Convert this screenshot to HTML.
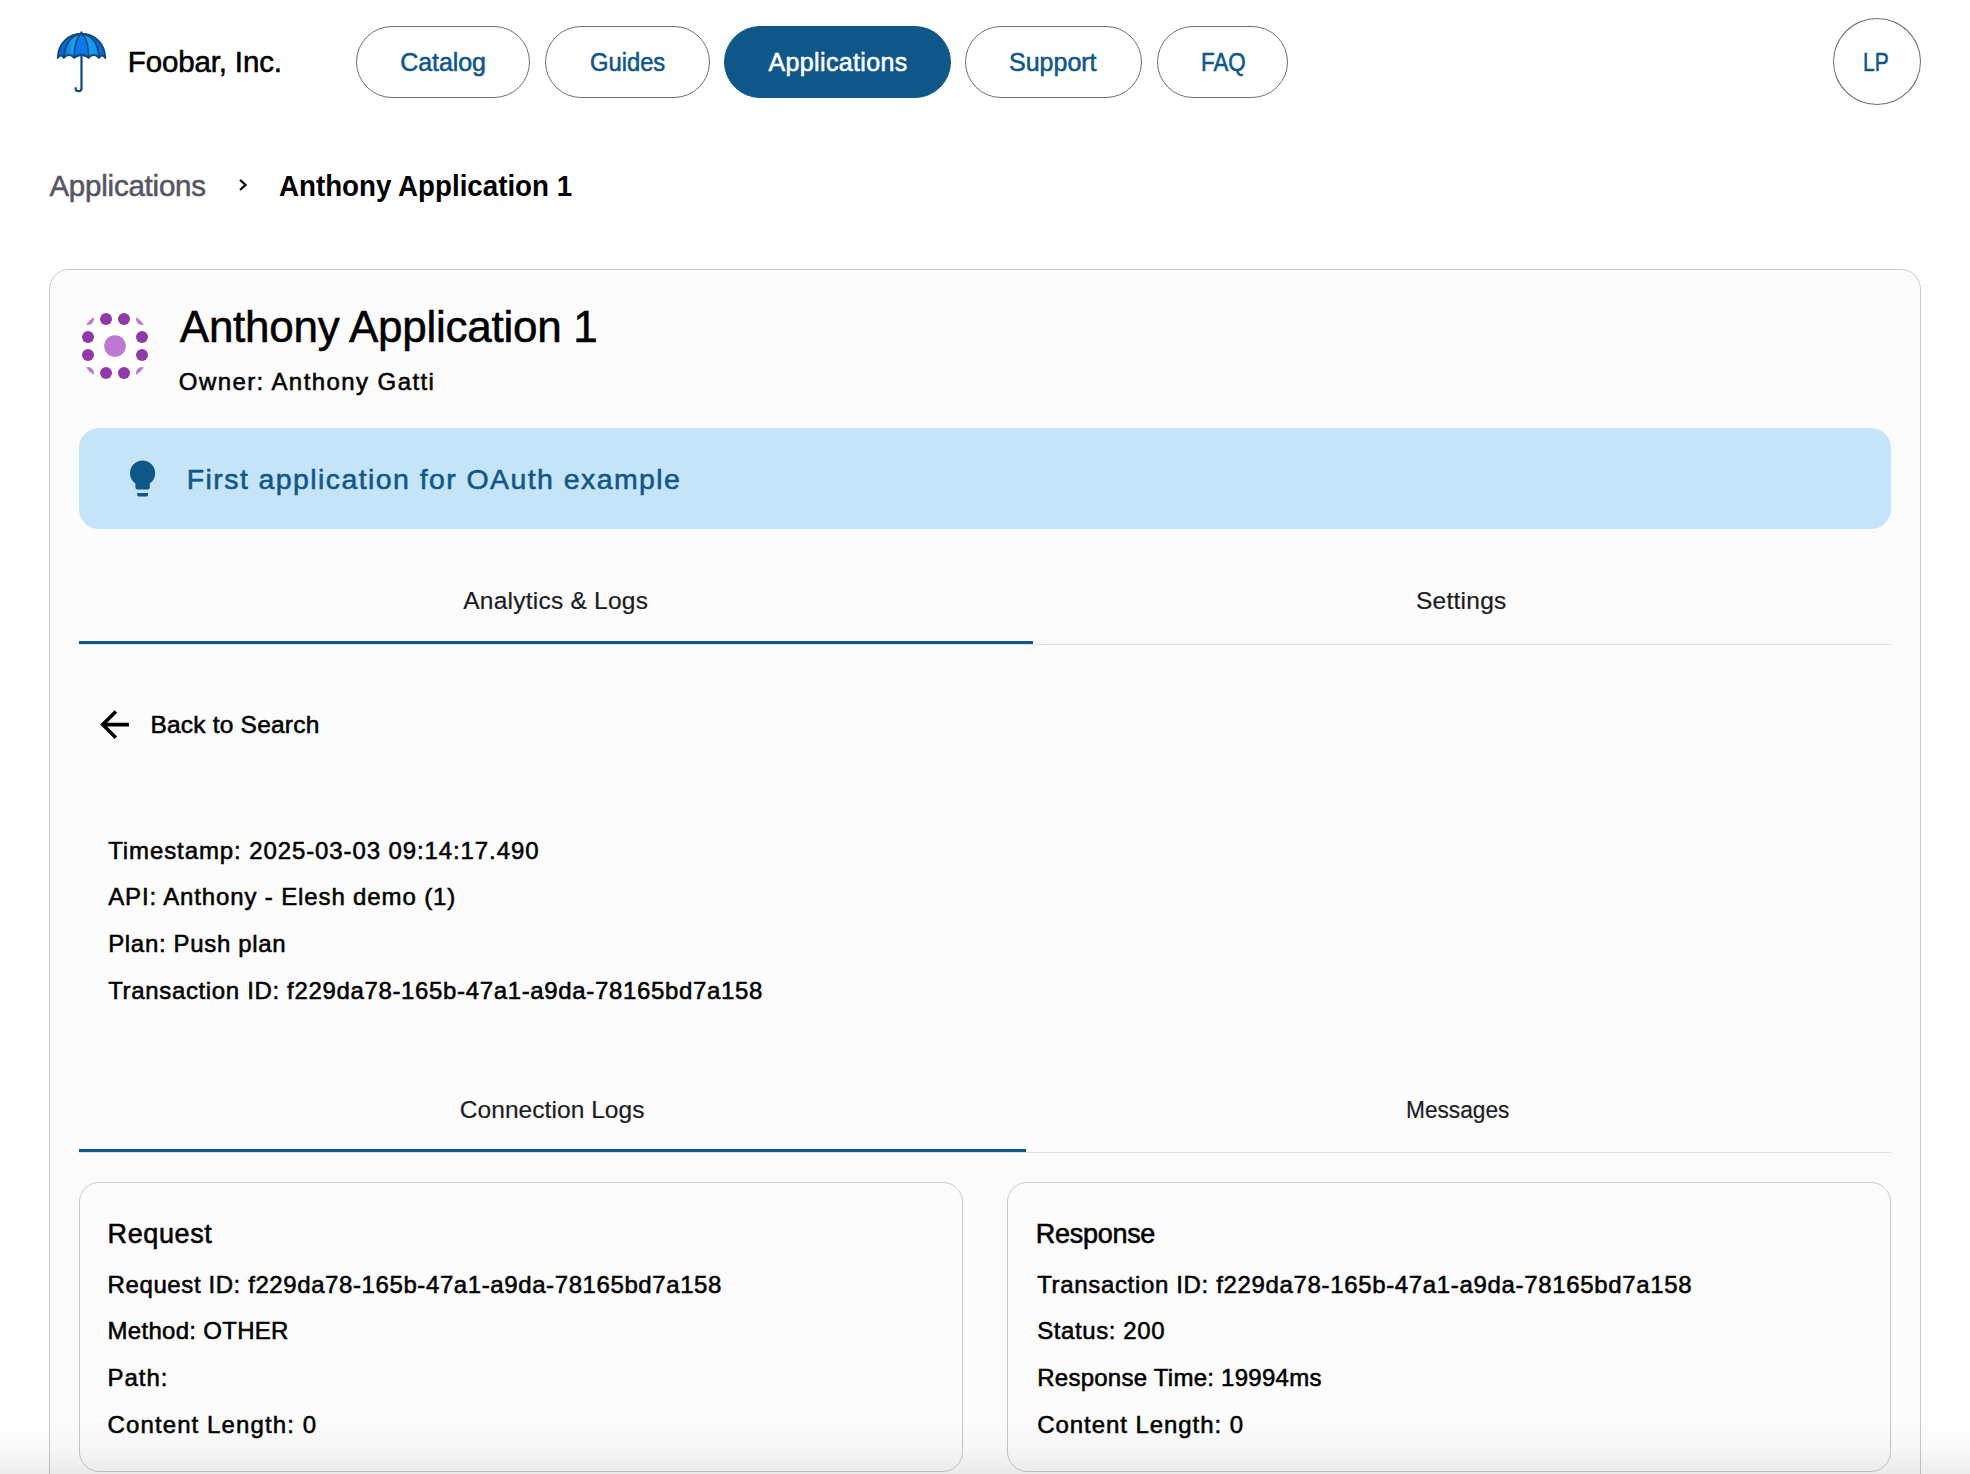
<!DOCTYPE html>
<html lang="en">
<head>
<meta charset="utf-8">
<title>Anthony Application 1 - Foobar, Inc.</title>
<style>
*{box-sizing:border-box;margin:0;padding:0}
html,body{width:1970px;height:1474px;overflow:hidden;background:#fff}
body{position:relative;font-family:"Liberation Sans",sans-serif;color:#000;-webkit-text-stroke:.55px currentColor}
.abs{position:absolute;white-space:nowrap}
header{position:absolute;left:0;top:0;width:1970px;height:124px}
.logo{position:absolute;left:50px;top:25px;width:64px;height:72px}
.brand{font-size:29.5px;line-height:34px}
nav a{position:absolute;top:26px;height:72px;border:1px solid #707074;border-radius:36px;color:#0f5788;font-size:25px;line-height:30px;text-decoration:none;white-space:nowrap}
nav a.on{background:#0f5788;border-color:#0f5788;color:#fff}
nav a span{position:absolute;white-space:nowrap}
.avatar{position:absolute;left:1833px;top:18px;width:88px;height:87px;border:1px solid #707074;border-radius:50%;color:#0f5788;font-size:25px;line-height:30px}
.crumbs{position:absolute;left:0;top:160px;width:1970px;height:50px;font-size:29.5px;line-height:36px}
.crumbs .c1{color:#575563}
.crumbs b{font-weight:700;-webkit-text-stroke:0}
main{position:absolute;left:49px;top:269px;width:1872px;height:1260px;border:1px solid #c9c7d0;border-radius:20px;background:#fcfcfc}
h1{font-size:44px;line-height:54px;font-weight:400}
.owner{font-size:24px;line-height:30px}
.banner{position:absolute;left:28.6px;top:158px;width:1812.4px;height:101px;border-radius:20px;background:#c5e4f8;color:#0f5788}
.banner span{font-size:28.5px;line-height:36px}
.tabs{position:absolute;left:29px;width:1812px;height:85px;border-bottom:1px solid #e2e1e7;font-size:24.5px;line-height:30px;color:#1b1b20;-webkit-text-stroke:.2px currentColor}
.tabs .tab{position:absolute;top:0;height:84px}
.tabs .tab.on{border-bottom:3px solid #0f5788}
.back{font-size:24.5px;line-height:32px}
.meta{position:absolute;font-size:24px;line-height:46.65px;white-space:nowrap}
.box{position:absolute;top:912px;width:884px;height:290px;border:1px solid #c8c7cf;border-radius:20px;background:#fcfcfc;white-space:nowrap}
.box h2{font-size:27px;line-height:40px;font-weight:400}
.box .lines{position:absolute;font-size:24px;line-height:46.8px}
.fade{position:absolute;left:0;top:1422px;width:1970px;height:52px;background:linear-gradient(to bottom,rgba(0,0,0,0),rgba(0,0,0,.022) 50%,rgba(0,0,0,.07))}
</style>
</head>
<body>
<header>
  <svg class="logo" viewBox="0 0 64 72">
    <defs>
      <linearGradient id="ug1" x1="0" y1="0" x2="1" y2="0"><stop offset="0" stop-color="#0a6fe0"/><stop offset=".55" stop-color="#15a3f4"/><stop offset="1" stop-color="#15a3f4"/></linearGradient>
      <linearGradient id="ug2" x1="0" y1="0" x2="1" y2="0"><stop offset="0" stop-color="#16a6f5"/><stop offset="1" stop-color="#0f94ee"/></linearGradient>
      <clipPath id="dome"><path d="M7.6 32.6C8 18.5 18.2 8.3 31.5 8.3S55 18.5 55.6 32.6L55.2 33Q52 28.6 48.9 33Q43.7 27.6 38.6 33Q31.4 27.2 24.2 33Q19 27.6 13.9 33Q10.8 28.6 7.8 33Z"/></clipPath>
    </defs>
    <g clip-path="url(#dome)">
      <rect x="0" y="0" width="64" height="40" fill="#0a66d6"/>
      <path d="M31.5 8C19.5 10.6 14.4 21 13.9 34L24.2 34C24.4 21 26.2 12 31.5 8Z" fill="url(#ug1)"/>
      <path d="M31.5 8C26.2 12 24.4 21 24.2 34L38.6 34C38.4 21 36.8 12 31.5 8Z" fill="#0878f0"/>
      <path d="M31.5 8C43.5 10.6 48.4 21 48.9 34L38.6 34C38.4 21 36.8 12 31.5 8Z" fill="url(#ug2)"/>
    </g>
    <g fill="none" stroke="#0e4a74" stroke-width="2" stroke-linecap="round" stroke-linejoin="round">
      <path d="M31.5 8.6C19.5 10.6 14.4 21 13.9 32.4M31.5 8.6C26.2 12 24.4 21 24.2 32.4M31.5 8.6C36.8 12 38.4 21 38.6 32.4M31.5 8.6C43.5 10.6 48.4 21 48.9 32.4" stroke-width="1.7"/>
      <path d="M7.8 32.6C8.2 18.8 18.4 8.6 31.5 8.6S54.8 18.8 55.3 32.6" stroke-width="1.8"/>
      <path d="M7.8 32.8Q10.8 28.4 13.9 32.8Q19 27.4 24.2 32.8Q31.4 27 38.6 32.8Q43.7 27.4 48.9 32.8Q52 28.4 55.3 32.8" stroke-width="2"/>
      <path d="M31.5 7.3V8.6" stroke-width="2"/>
      <path d="M31.5 30V63.2a2.95 2.95 0 0 1-5.9 0" stroke-width="2.2"/>
    </g>
  </svg>
  <div id="brand" class="abs brand" style="left:127.80px;top:44.81px;letter-spacing:-0.145px">Foobar, Inc.</div>
  <nav>
    <a style="left:356px;width:174px"><span id="n1" style="left:43.20px;top:19.60px;letter-spacing:-0.067px">Catalog</span></a>
    <a style="left:545px;width:165px"><span id="n2" style="left:43.80px;top:19.60px;letter-spacing:0.000px;transform:scaleX(0.9499);transform-origin:0 50%">Guides</span></a>
    <a class="on" style="left:724px;width:227px"><span id="n3" style="left:43.60px;top:19.60px;letter-spacing:0.345px">Applications</span></a>
    <a style="left:965px;width:177px"><span id="n4" style="left:43.00px;top:19.60px;letter-spacing:0.000px">Support</span></a>
    <a style="left:1157px;width:131px"><span id="n5" style="left:43.00px;top:19.60px;letter-spacing:0.000px;transform:scaleX(0.8948);transform-origin:0 50%">FAQ</span></a>
  </nav>
  <div class="avatar"><span id="lp" class="abs" style="left:29.40px;top:27.81px;letter-spacing:0.000px;transform:scaleX(0.8384);transform-origin:0 50%">LP</span></div>
</header>

<div class="crumbs">
  <span id="c1" class="abs c1" style="left:49.40px;top:7.81px;letter-spacing:-0.218px">Applications</span>
  <svg class="abs" style="left:237.2px;top:17.4px" width="12" height="16" viewBox="0 0 12 16"><path d="M3 2.9L8.6 7.9L3 12.9" fill="none" stroke="#111" stroke-width="2.3"/></svg>
  <b id="c2" class="abs" style="left:278.60px;top:7.71px;letter-spacing:0.000px;transform:scaleX(0.9396);transform-origin:0 50%">Anthony Application 1</b>
</div>

<main>
  <svg class="abs" style="left:26.85px;top:38px" width="76" height="76" viewBox="0 0 76 76">
    <defs><clipPath id="idc"><circle cx="38" cy="38" r="36"/></clipPath></defs>
    <circle cx="38" cy="38" r="36" fill="#fff"/>
    <g clip-path="url(#idc)">
      <g fill="#bd7ad3"><circle cx="11" cy="11" r="6"/><circle cx="65" cy="11" r="6"/><circle cx="11" cy="65" r="6"/><circle cx="65" cy="65" r="6"/><circle cx="38" cy="38" r="10.8"/></g>
      <g fill="#9139a8"><circle cx="29" cy="11" r="6"/><circle cx="47" cy="11" r="6"/><circle cx="29" cy="65" r="6"/><circle cx="47" cy="65" r="6"/><circle cx="11" cy="29" r="6"/><circle cx="11" cy="47" r="6"/><circle cx="65" cy="29" r="6"/><circle cx="65" cy="47" r="6"/></g>
    </g>
  </svg>
  <h1 id="h1" class="abs" style="left:129.80px;top:29.81px;letter-spacing:-0.260px">Anthony Application 1</h1>
  <div id="owner" class="abs owner" style="left:128.80px;top:96.81px;letter-spacing:1.421px">Owner: Anthony Gatti</div>

  <div class="banner">
    <svg class="abs" style="left:42.9px;top:28.5px" width="43.2" height="43.2" viewBox="0 0 24 24"><path fill="#0f5788" d="M9 21c0 .55.45 1 1 1h4c.55 0 1-.45 1-1v-1H9v1zm3-19C8.14 2 5 5.14 5 9c0 2.380 1.190 4.470 3 5.740V17c0 .55.45 1 1 1h6c.55 0 1-.45 1-1v-2.260c1.810-1.270 3-3.360 3-5.740 0-3.860-3.140-7-7-7z"/></svg>
    <span id="ban" class="abs" style="left:108.20px;top:32.71px;letter-spacing:1.412px">First application for OAuth example</span>
  </div>

  <div class="tabs" style="top:290px">
    <div class="tab on" style="left:0;width:954px"><span id="t1" class="abs" style="left:384.20px;top:25.90px;letter-spacing:0.240px">Analytics &amp; Logs</span></div>
    <div class="tab" style="left:954px;width:858px"><span id="t2" class="abs" style="left:383.00px;top:25.81px;letter-spacing:0.257px">Settings</span></div>
  </div>

  <svg class="abs" style="left:43.45px;top:432.7px" width="43.2" height="43.2" viewBox="0 0 24 24"><path fill="#000" d="M20 11H7.830l5.590-5.590L12 4l-8 8 8 8 1.410-1.410L7.830 13H20v-2z"/></svg>
  <div id="back" class="abs back" style="left:100.40px;top:438.71px;letter-spacing:0.215px">Back to Search</div>

  <div class="meta" id="meta" style="left:58.20px;top:557.81px">
    <p><span id="m1" style="letter-spacing:0.897px">Timestamp: 2025-03-03 09:14:17.490</span></p>
    <p><span id="m2" style="letter-spacing:0.864px">API: Anthony - Elesh demo (1)</span></p>
    <p><span id="m3" style="letter-spacing:0.671px">Plan: Push plan</span></p>
    <p><span id="m4" style="letter-spacing:0.651px">Transaction ID: f229da78-165b-47a1-a9da-78165bd7a158</span></p>
  </div>

  <div class="tabs" style="top:798px">
    <div class="tab on" style="left:0;width:947px"><span id="t3" class="abs" style="left:380.80px;top:26.71px;letter-spacing:0.057px">Connection Logs</span></div>
    <div class="tab" style="left:947px;width:865px"><span id="t4" class="abs" style="left:380.20px;top:26.60px;letter-spacing:0.000px;transform:scaleX(0.9263);transform-origin:0 50%">Messages</span></div>
  </div>

  <section class="box" style="left:29px">
    <h2 id="q0" class="abs" style="left:27.60px;top:31.21px;letter-spacing:0.600px">Request</h2>
    <div class="lines" style="left:27.60px;top:78.60px">
      <p><span id="q1" style="letter-spacing:0.596px">Request ID: f229da78-165b-47a1-a9da-78165bd7a158</span></p>
      <p><span id="q2" style="letter-spacing:0.283px">Method: OTHER</span></p>
      <p><span id="q3" style="letter-spacing:0.950px">Path:</span></p>
      <p><span id="q4" style="letter-spacing:1.100px">Content Length: 0</span></p>
    </div>
  </section>
  <section class="box" style="left:957px">
    <h2 id="r0" class="abs" style="left:27.80px;top:31.21px;letter-spacing:-0.286px">Response</h2>
    <div class="lines" style="left:29.20px;top:78.60px">
      <p><span id="r1" style="letter-spacing:0.655px">Transaction ID: f229da78-165b-47a1-a9da-78165bd7a158</span></p>
      <p><span id="r2" style="letter-spacing:0.600px">Status: 200</span></p>
      <p><span id="r3" style="letter-spacing:0.257px">Response Time: 19994ms</span></p>
      <p><span id="r4" style="letter-spacing:0.938px">Content Length: 0</span></p>
    </div>
  </section>
</main>
<div class="fade"></div>
</body>
</html>
